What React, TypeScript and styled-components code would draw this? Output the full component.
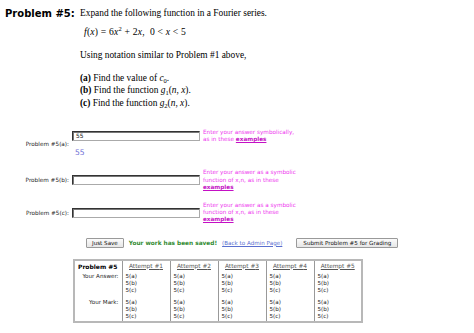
import React from "react";
import styled, { createGlobalStyle } from "styled-components";

const GlobalStyle = createGlobalStyle`
  html, body {
    margin: 0;
    padding: 0;
    background: #ffffff;
  }
  body {
    font-family: "DejaVu Sans", Verdana, sans-serif;
    color: #000;
  }
`;

const Page = styled.div`
  width: 474px;
  height: 333px;
  overflow: hidden;
  padding-top: 7px;
  box-sizing: border-box;
`;

const ProblemHead = styled.div`
  display: grid;
  grid-template-columns: 80px 1fr;
`;

const Title = styled.div`
  font-family: "DejaVu Sans", Verdana, sans-serif;
  font-weight: bold;
  font-size: 10px;
  line-height: 14px;
  padding-left: 5px;
  white-space: nowrap;
`;

const Statement = styled.div`
  font-family: "Liberation Serif", "Times New Roman", serif;
  font-size: 9.4px;
  line-height: 14px;
`;

const Line = styled.div<{ $top?: number; $indent?: number }>`
  margin-top: ${(p) => p.$top ?? 0}px;
  padding-left: ${(p) => p.$indent ?? 0}px;
  line-height: 12.5px;
  white-space: nowrap;
`;

const Equation = styled(Line)`
  font-size: 9.6px;
  letter-spacing: 0.2px;
`;

const I = styled.i`
  font-style: italic;
`;

const Part = styled.b`
  font-weight: bold;
`;

const Sub = styled.sub`
  font-size: 6.5px;
  line-height: 0;
  vertical-align: -2px;
`;

const Sup = styled.sup`
  font-size: 6.5px;
  line-height: 0;
  vertical-align: 4px;
`;

const Answers = styled.div`
  margin-top: 20px;
  display: flex;
  flex-direction: column;
  gap: 11px;
`;

const AnswerRow = styled.div`
  display: grid;
  grid-template-columns: 72px 1fr;
  align-items: center;
`;

const Label = styled.div`
  font-size: 5.7px;
  color: #222;
  text-align: right;
  padding-right: 3px;
  white-space: nowrap;
`;

const FieldCell = styled.div`
  display: grid;
  grid-template-columns: 131px auto;
  align-items: center;
`;

const Input = styled.div`
  box-sizing: border-box;
  width: 128px;
  height: 10px;
  border: 1px solid;
  border-color: #333 #aaa #aaa #333;
  box-shadow: inset 1px 1px 0 #777;
  font-size: 5.8px;
  line-height: 8px;
  padding-left: 3px;
  color: #111;
  background: #fff;
`;

const Hint = styled.div`
  font-size: 5.7px;
  line-height: 7.2px;
  color: #ee33ee;
  white-space: nowrap;
`;

const HintLink = styled.span`
  font-weight: bold;
  color: #c40fc4;
  text-decoration: underline;
`;

const Preview = styled.div`
  grid-column: 1;
  font-size: 7.6px;
  line-height: 10px;
  color: #6f6fd6;
  padding-left: 3px;
  margin-top: 5px;
`;

const Actions = styled.div`
  margin-top: 14px;
  padding-left: 86px;
  display: flex;
  align-items: center;
  gap: 5px;
  font-size: 5.6px;
  white-space: nowrap;
`;

const Button = styled.div<{ $wide?: boolean }>`
  box-sizing: border-box;
  height: 10px;
  line-height: 8px;
  padding: 0 ${(p) => (p.$wide ? 6 : 5)}px;
  border: 1px solid #9a9a9a;
  border-radius: 1px;
  background: linear-gradient(#fbfbfb, #e6e6e6);
  color: #111;
  margin-left: ${(p) => (p.$wide ? 9 : 0)}px;
`;

const Saved = styled.span`
  font-weight: bold;
  color: #2f8a2f;
  font-size: 5.8px;
`;

const AdminLink = styled.span`
  color: #5a6fcf;
  text-decoration: underline;
`;

const Attempts = styled.table`
  margin: 11px 0 0 73px;
  border-collapse: collapse;
  border: 2px solid #b8b8b8;
  font-size: 5.6px;
  line-height: 7px;
  table-layout: fixed;
  width: 289px;
`;

const Cell = styled.td<{ $first?: boolean }>`
  box-sizing: border-box;
  width: 48px;
  padding: 1px 3px;
  vertical-align: top;
  border-left: ${(p) => (p.$first ? "none" : "1px solid #999")};
  text-align: ${(p) => (p.$first ? "right" : "left")};
  white-space: nowrap;
  overflow: hidden;
  color: #222;
`;

const HeadCell = styled(Cell)`
  padding-top: 2px;
  padding-bottom: 2px;
  text-align: center;
  font-size: 5.8px;
`;

const HeadTitle = styled(HeadCell)`
  text-align: left;
  font-weight: bold;
  color: #000;
  font-size: 6px;
`;

const AttemptLink = styled.span`
  color: #555;
  text-decoration: underline;
`;

const BodyCell = styled(Cell)<{ $pad: number }>`
  padding-top: ${(p) => p.$pad}px;
`;

const attempts = [1, 2, 3, 4, 5];
const parts = ["a", "b", "c"];

const rows = [
  { id: "a", value: "55", hint: ["Enter your answer symbolically,", "as in these "], preview: "55" },
  { id: "b", value: "", hint: ["Enter your answer as a symbolic", "function of x,n, as in these", ""] },
  { id: "c", value: "", hint: ["Enter your answer as a symbolic", "function of x,n, as in these", ""] },
];

function HintText({ lines }: { lines: string[] }) {
  return (
    <Hint>
      {lines.map((l, i) =>
        i === lines.length - 1 ? (
          <div key={i}>
            {l}
            <HintLink>examples</HintLink>
          </div>
        ) : (
          <div key={i}>{l}</div>
        )
      )}
    </Hint>
  );
}

export default function App() {
  return (
    <Page>
      <GlobalStyle />
      <ProblemHead>
        <Title>Problem #5:</Title>
        <Statement>
          <Line>Expand the following function in a Fourier series.</Line>
          <Equation $top={6} $indent={4}>
            <I>f</I>(<I>x</I>) = 6<I>x</I>
            <Sup>2</Sup> + 2<I>x</I>,&nbsp; 0 &lt; <I>x</I> &lt; 5
          </Equation>
          <Line $top={11}>Using notation similar to Problem #1 above,</Line>
          <Line $top={10}>
            <Part>(a)</Part> Find the value of <I>c</I>
            <Sub>0</Sub>.
          </Line>
          <Line>
            <Part>(b)</Part> Find the function <I>g</I>
            <Sub>1</Sub>(<I>n</I>, <I>x</I>).
          </Line>
          <Line>
            <Part>(c)</Part> Find the function <I>g</I>
            <Sub>2</Sub>(<I>n</I>, <I>x</I>).
          </Line>
        </Statement>
      </ProblemHead>

      <Answers>
        {rows.map((r) => (
          <AnswerRow key={r.id}>
            <Label>Problem #5({r.id}):</Label>
            <FieldCell>
              <Input>{r.value}</Input>
              <HintText lines={r.hint} />
              {r.preview && <Preview>{r.preview}</Preview>}
            </FieldCell>
          </AnswerRow>
        ))}
      </Answers>

      <Actions>
        <Button>Just Save</Button>
        <Saved>Your work has been saved!</Saved>
        <AdminLink>(Back to Admin Page)</AdminLink>
        <Button $wide>Submit Problem #5 for Grading</Button>
      </Actions>

      <Attempts>
        <tbody>
          <tr>
            <HeadTitle $first>Problem #5</HeadTitle>
            {attempts.map((n) => (
              <HeadCell key={n}>
                <AttemptLink>Attempt #{n}</AttemptLink>
              </HeadCell>
            ))}
          </tr>
          <tr>
            <BodyCell $first $pad={1}>Your Answer:</BodyCell>
            {attempts.map((n) => (
              <BodyCell key={n} $pad={1}>
                {parts.map((p) => (
                  <div key={p}>5({p})</div>
                ))}
              </BodyCell>
            ))}
          </tr>
          <tr>
            <BodyCell $first $pad={4}>Your Mark:</BodyCell>
            {attempts.map((n) => (
              <BodyCell key={n} $pad={4}>
                {parts.map((p) => (
                  <div key={p}>5({p})</div>
                ))}
              </BodyCell>
            ))}
          </tr>
        </tbody>
      </Attempts>
    </Page>
  );
}
